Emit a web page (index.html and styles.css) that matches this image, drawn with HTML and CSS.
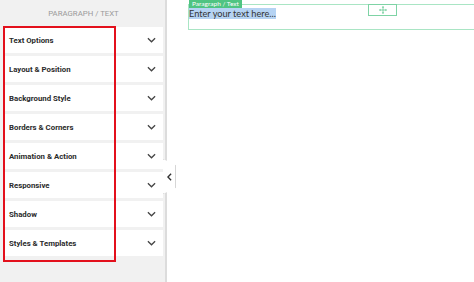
FILE: index.html
```html
<!DOCTYPE html>
<html lang="en">
<head>
  <meta charset="UTF-8" />
  <title>Paragraph / Text</title>
  <link rel="stylesheet" href="styles.css">
</head>
<body>
  <div class="editor">
    <div class="sidebar">
      <div class="sidebar-title">PARAGRAPH / TEXT</div>
      <div class="section-list">
        <div class="section"><span>Text Options</span><svg class="chev" viewBox="0 0 10 6"><path d="M1 1l4 4 4-4"/></svg></div>
        <div class="section"><span>Layout &amp; Position</span><svg class="chev" viewBox="0 0 10 6"><path d="M1 1l4 4 4-4"/></svg></div>
        <div class="section"><span>Background Style</span><svg class="chev" viewBox="0 0 10 6"><path d="M1 1l4 4 4-4"/></svg></div>
        <div class="section"><span>Borders &amp; Corners</span><svg class="chev" viewBox="0 0 10 6"><path d="M1 1l4 4 4-4"/></svg></div>
        <div class="section"><span>Animation &amp; Action</span><svg class="chev" viewBox="0 0 10 6"><path d="M1 1l4 4 4-4"/></svg></div>
        <div class="section"><span>Responsive</span><svg class="chev" viewBox="0 0 10 6"><path d="M1 1l4 4 4-4"/></svg></div>
        <div class="section"><span>Shadow</span><svg class="chev" viewBox="0 0 10 6"><path d="M1 1l4 4 4-4"/></svg></div>
        <div class="section"><span>Styles &amp; Templates</span><svg class="chev" viewBox="0 0 10 6"><path d="M1 1l4 4 4-4"/></svg></div>
      </div>
      <div class="highlight"></div>
      <div class="collapse-tab">
        <svg viewBox="0 0 6 10"><path d="M5 1L1 5l4 4"/></svg>
      </div>
    </div>

    <div class="canvas">
      <div class="text-block">
        <div class="block-label">Paragraph / Text</div>
        <div class="block-text"><span class="selected">Enter your text here...</span></div>
        <div class="move-handle">
          <svg viewBox="0 0 10 10"><path d="M5 1v8M1 5h8"/><path class="tip" d="M5 0l-1.5 1.8h3zM5 10l-1.5-1.8h3zM0 5l1.8-1.5v3zM10 5l-1.8-1.5v3z"/></svg>
        </div>
      </div>
    </div>
  </div>
</body>
</html>
```

FILE: styles.css
```css
* {
  margin: 0;
  padding: 0;
  box-sizing: border-box;
}
body {
  font-family: 'Roboto', 'Liberation Sans', sans-serif;
  background: #fff;
  color: #333;
  width: 474px;
  height: 282px;
  overflow: hidden;
}
.editor {
  display: flex;
  height: 282px;
}
.sidebar {
  position: relative;
  width: 167px;
  flex-shrink: 0;
  background: #f1f1f1;
  border-right: 2px solid #dcdcdc;
  padding: 0 2px 0 4px;
}
.sidebar-title {
  height: 27px;
  display: flex;
  align-items: center;
  justify-content: center;
  font-size: 7.8px;
  color: #9a9a9a;
}
.section-list {
  display: flex;
  flex-direction: column;
  gap: 3px;
}
.section {
  height: 26px;
  background: #fff;
  display: flex;
  align-items: center;
  justify-content: space-between;
  padding: 0 7px 0 5px;
  font-size: 7.8px;
  font-weight: 700;
  color: #2b2b2b;
}
.chev {
  width: 9px;
  height: 6px;
  fill: none;
  stroke: #444;
  stroke-width: 1.4;
}
.highlight {
  position: absolute;
  left: 3px;
  top: 26px;
  width: 113px;
  height: 236px;
  border: 2px solid #e3101c;
}
.collapse-tab {
  position: absolute;
  left: 163px;
  top: 159px;
  width: 13px;
  height: 35px;
  background: #fff;
  border: 1px solid #d6d6d6;
  border-left: none;
  clip-path: polygon(0 0, 100% 18%, 100% 82%, 0 100%);
  display: flex;
  align-items: center;
  justify-content: center;
}
.collapse-tab svg {
  width: 5px;
  height: 8px;
  fill: none;
  stroke: #333;
  stroke-width: 1.8;
}
.canvas {
  flex: 1;
  padding: 4px 0 0 21px;
  overflow: hidden;
}
.text-block {
  position: relative;
  width: 320px;
  height: 26px;
  border: 1px solid #a9e5c4;
  border-right: none;
}
.block-label {
  position: absolute;
  left: 0;
  top: -5px;
  height: 8px;
  padding: 0 3px;
  background: #4fc482;
  color: #fff;
  font-family: 'Lato', 'Liberation Sans', sans-serif;
  font-size: 6.5px;
  line-height: 8px;
}
.block-text {
  padding-top: 4px;
  font-family: 'Lato', 'Liberation Sans', sans-serif;
  font-size: 9.2px;
  line-height: 10px;
  color: #333;
}
.selected {
  background: #b5d3f3;
}
.move-handle {
  position: absolute;
  left: 179px;
  top: -1px;
  width: 29px;
  height: 12px;
  border: 1px solid #7ed3a5;
  background: #fff;
  display: flex;
  align-items: center;
  justify-content: center;
}
.move-handle svg {
  width: 8px;
  height: 8px;
  fill: none;
  stroke: #5cc68c;
  stroke-width: 0.9;
}
.move-handle .tip {
  fill: #5cc68c;
  stroke: none;
}
```
